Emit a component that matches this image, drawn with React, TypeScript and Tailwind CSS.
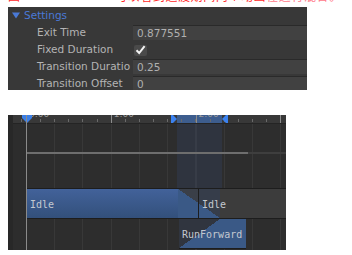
const majorTicks = [
  { x: 13, label: "0:00" },
  { x: 97.75, label: "1:00" },
  { x: 182.5, label: "2:00" },
  { x: 267.25, label: "" },
];

function TopNote() {
  return (
    <div className="h-[7px] overflow-hidden flex items-start text-[#ff2a2a] font-['Noto_Sans_CJK_SC',sans-serif]">
      <div className="ml-[8px] -mt-[11px] h-[14px] text-[12px] leading-[14px]">图</div>
      <div className="ml-[95px] -mt-[11px] h-[14px] text-[12px] leading-[14px] tracking-[0.6px] whitespace-nowrap">
        可以看到过渡期间两个动画<span className="text-[#ff7a8a]">在进行混合。</span>
      </div>
    </div>
  );
}

function Field({ children }: { children?: React.ReactNode }) {
  return (
    <div className="flex-1 mt-px h-[15px] bg-[#414141] border-t border-[#2a2a2a] pl-[4px] flex items-center text-[#b0b0b0]">
      {children}
    </div>
  );
}

function Row({ label, children }: { label: string; children: React.ReactNode }) {
  return (
    <div className="h-[17px] flex">
      <div className="w-[125px] pl-[29px] flex items-center text-[#b4b4b4] whitespace-nowrap overflow-hidden">
        {label}
      </div>
      {children}
    </div>
  );
}

function SettingsPanel() {
  return (
    <div className="ml-[8px] w-[299px] h-[83px] bg-[#383838] overflow-hidden text-[10.5px] leading-none">
      <div className="h-[17px] flex items-center pl-[4px] gap-[4px] text-[#4a79d6]">
        <svg width="8" height="7" viewBox="0 0 8 7">
          <path d="M0 0.5 H8 L4 6.5 Z" fill="#4a79d6" />
        </svg>
        <span>Settings</span>
      </div>
      <Row label="Exit Time">
        <Field>0.877551</Field>
      </Row>
      <Row label="Fixed Duration">
        <div className="flex-1 flex items-center">
          <div className="ml-[1px] mt-[1px] w-[13px] h-[11px] rounded-[2px] bg-[#4a4a4a] flex items-center justify-center">
            <svg width="11" height="10" viewBox="0 0 11 10">
              <path d="M1.5 5.2 L4.2 8 L9.6 1.2" stroke="#f2f2f2" strokeWidth="2" fill="none" />
            </svg>
          </div>
        </div>
      </Row>
      <Row label="Transition Duratio">
        <Field>0.25</Field>
      </Row>
      <Row label="Transition Offset">
        <Field>0</Field>
      </Row>
    </div>
  );
}

function Ruler() {
  return (
    <div className="relative h-[9px] bg-[#383838] border-b border-[#242424] overflow-hidden">
      <div className="absolute left-[164px] w-[45px] top-0 bottom-0 bg-[#3d5d8e]" />
      <div className="absolute left-0 right-0 bottom-[1px] h-[3px] bg-[repeating-linear-gradient(to_right,#6a6a6a_0_1px,transparent_1px_14.125px)] bg-[position:13px_0]" />
      {majorTicks.map((t) => (
        <div key={t.x}>
          <div className="absolute top-0 bottom-0 w-px bg-[#8c8c8c]" style={{ left: t.x }} />
          {t.label && (
            <span
              className="absolute -top-[5px] text-[9px] leading-[9px] text-[#9a9a9a] font-['DejaVu_Sans',sans-serif]"
              style={{ left: t.x + 3 }}
            >
              {t.label}
            </span>
          )}
        </div>
      ))}
      <svg className="absolute left-[158px] top-0" width="6" height="8" viewBox="0 0 6 8">
        <path d="M0 0 H2 L6 4 L2 8 H0 Z" fill="#3b82f0" />
      </svg>
      <svg className="absolute left-[209px] top-0" width="6" height="8" viewBox="0 0 6 8">
        <path d="M6 0 H4 L0 4 L4 8 H6 Z" fill="#3b82f0" />
      </svg>
      <svg className="absolute left-[9px] top-0" width="10" height="8" viewBox="0 0 10 8">
        <path d="M0 0 H10 V3 L5 8 L0 3 Z" fill="#3b7fe6" />
      </svg>
    </div>
  );
}

function Clip({ label, className }: { label: string; className: string }) {
  return (
    <div
      className={
        "h-full border-y border-[#1d1d1d] flex items-center pl-[3px] pt-[2px] text-[10px] text-[#c4c8d0] font-['DejaVu_Sans_Mono',monospace] bg-no-repeat " +
        className
      }
    >
      {label}
    </div>
  );
}

function Timeline() {
  return (
    <div className="mt-[25px] ml-[8px] w-[278px] h-[135px] flex bg-[#2d2d2d] overflow-hidden">
      <div className="w-[5px] bg-[#282828]" />
      <div className="relative flex-1 flex flex-col">
        <Ruler />
        <div className="flex-1 flex flex-col bg-[repeating-linear-gradient(to_right,#383838_0_1px,transparent_1px_28.25px)] bg-[position:13px_0]">
          <div className="relative h-[64px]">
            <div className="absolute left-[164px] w-[45px] top-0 bottom-0 bg-[#34466a]/30" />
            <div className="relative mt-[28px] flex h-[2px]">
              <div className="ml-[13px] w-[222px] bg-[#6e6e6e]" />
              <div className="flex-1 bg-[#3e3e3e]" />
            </div>
          </div>
          <div className="h-[31px] flex">
            <div className="w-[14px]" />
            <Clip
              label="Idle"
              className="w-[171px] bg-[#3a3f48] bg-[linear-gradient(to_top_right,#3a5986_50%,transparent_50%),linear-gradient(#42629a,#33507b)] bg-[length:42px_100%,151px_100%] bg-[position:151px_0,0_0]"
            />
            <Clip
              label="Idle"
              className="flex-1 border-l bg-[#3c3c3c] bg-[linear-gradient(to_top_right,#3a5986_50%,#363d4a_50%)] bg-[length:42px_100%] bg-[position:-21px_0]"
            />
          </div>
          <div className="h-[30px] flex">
            <div className="w-[166px]" />
            <Clip
              label="RunForward"
              className="w-[67px] border-t-0 bg-[#3a5986] bg-[linear-gradient(to_bottom_right,#30353f_50%,#3a5986_50%)] bg-[length:41px_100%] bg-[position:0_0]"
            />
          </div>
        </div>
        <div className="absolute left-[13px] top-0 bottom-0 w-px bg-[#8a8a8a]" />
      </div>
    </div>
  );
}

export default function App() {
  return (
    <div className="w-[352px] h-[255px] bg-white overflow-hidden font-['DejaVu_Sans',sans-serif]">
      <TopNote />
      <SettingsPanel />
      <Timeline />
    </div>
  );
}
